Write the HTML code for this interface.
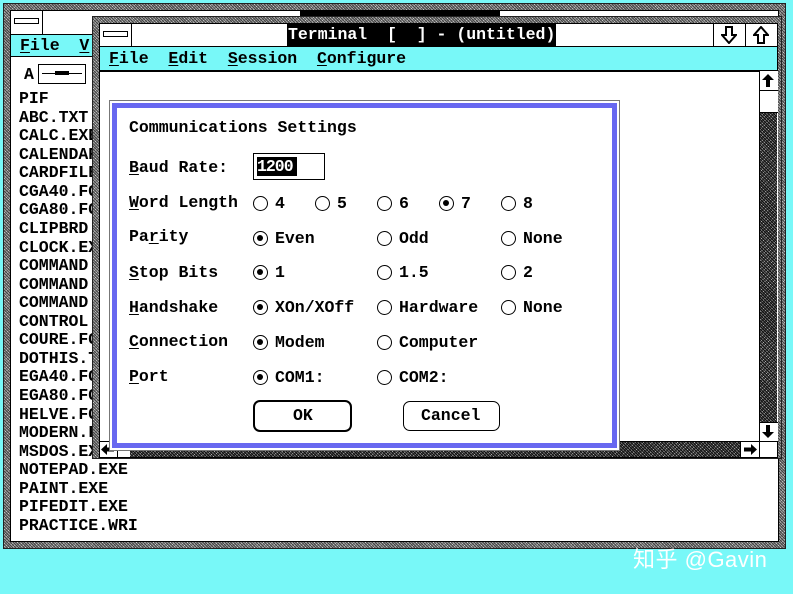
<!DOCTYPE html>
<html><head><meta charset="utf-8"><style>
*{margin:0;padding:0;box-sizing:border-box}
body{width:793px;height:594px;background:#78f8f8;position:relative;overflow:hidden;font-family:"Liberation Mono",monospace;font-weight:bold;font-size:16.5px;color:#000}
.a{position:absolute}
.hat{background-color:#8c8c8c;background-image:repeating-linear-gradient(45deg,#444 0 1px,transparent 1px 2px),repeating-linear-gradient(-45deg,#ccc 0 1px,transparent 1px 3px);border:1px solid #222}
.dark{background-color:#444;background-image:repeating-linear-gradient(45deg,#111 0 1px,transparent 1px 2px),repeating-linear-gradient(-45deg,#aaa 0 1px,transparent 1px 3px)}
.w{background:#fff}
.cy{background:#78f8f8}
.t{position:absolute;white-space:pre;line-height:18px}
u{text-decoration:underline;text-underline-offset:2px}
.r{position:absolute;width:15px;height:15px;border:1.5px solid #000;border-radius:50%;background:#fff}
.r.on::after{content:"";position:absolute;left:3px;top:3px;width:6px;height:6px;border-radius:50%;background:#000}
</style></head><body>
<!-- outer window -->
<div class="a hat" style="left:3px;top:3px;width:783px;height:546px"></div>
<div class="a w" style="left:10px;top:10px;width:769px;height:532px;border:1px solid #000"></div>
<div class="a" style="left:10px;top:10px;width:769px;height:25px;border-bottom:1px solid #000"></div>
<div class="a" style="left:42px;top:10px;width:1px;height:25px;background:#000"></div>
<div class="a" style="left:14px;top:18px;width:25px;height:6px;border:1.5px solid #000;background:#fff"></div>
<div class="a" style="left:300px;top:10px;width:200px;height:8px;background:#000"></div>
<div class="a cy" style="left:11px;top:35px;width:767px;height:22px;border-bottom:1px solid #000"></div>
<div class="t" style="left:20px;top:37px"><u>F</u>ile  <u>V</u></div>
<div class="t" style="left:24px;top:66px">A</div>
<div class="a" style="left:38px;top:64px;width:48px;height:20px;border:1px solid #000"></div>
<div class="a" style="left:42px;top:73px;width:40px;height:1px;background:#000"></div>
<div class="a" style="left:55px;top:71px;width:14px;height:4px;background:#000"></div>
<div class="t" style="left:19px;top:90px;line-height:18.57px">PIF
ABC.TXT
CALC.EXE
CALENDAR
CARDFILE
CGA40.FON
CGA80.FON
CLIPBRD
CLOCK.EXE
COMMAND
COMMAND
COMMAND
CONTROL
COURE.FON
DOTHIS.T
EGA40.FON
EGA80.FON
HELVE.FON
MODERN.F
MSDOS.EXE
NOTEPAD.EXE
PAINT.EXE
PIFEDIT.EXE
PRACTICE.WRI</div>
<!-- terminal window -->
<div class="a hat" style="left:92px;top:16px;width:690px;height:443px"></div>
<div class="a w" style="left:99px;top:23px;width:679px;height:24px;border:1px solid #000"></div>
<div class="a" style="left:131px;top:23px;width:1px;height:24px;background:#000"></div>
<div class="a" style="left:103px;top:31px;width:25px;height:6px;border:1.5px solid #000;background:#fff"></div>
<div class="a" style="left:287px;top:24px;width:269px;height:22px;background:#000"></div>
<div class="t" style="left:288px;top:26px;color:#fff">Terminal  [  ] - (untitled)</div>
<div class="a" style="left:713px;top:23px;width:1px;height:24px;background:#000"></div>
<div class="a" style="left:745px;top:23px;width:1px;height:24px;background:#000"></div>
<svg class="a" style="left:721px;top:26px" width="16" height="18" viewBox="0 0 16 18"><path d="M5 1h6v8h4l-7 8-7-8h4z" fill="#fff" stroke="#000" stroke-width="2"/></svg>
<svg class="a" style="left:753px;top:26px" width="16" height="18" viewBox="0 0 16 18"><path d="M5 17h6v-8h4l-7-8-7 8h4z" fill="#fff" stroke="#000" stroke-width="2"/></svg>
<div class="a cy" style="left:99px;top:47px;width:679px;height:24px;border-bottom:1px solid #000;border-left:1px solid #000;border-right:1px solid #000"></div>
<div class="t" style="left:109px;top:50px"><u>F</u>ile  <u>E</u>dit  <u>S</u>ession  <u>C</u>onfigure</div>
<div class="a w" style="left:99px;top:71px;width:679px;height:387px;border:1px solid #000"></div>
<!-- v scroll -->
<div class="a w" style="left:759px;top:71px;width:19px;height:370px;border-left:1px solid #000"></div>
<div class="a dark" style="left:760px;top:112px;width:17px;height:311px"></div>
<div class="a" style="left:760px;top:90px;width:18px;height:1px;background:#000"></div>
<div class="a" style="left:760px;top:112px;width:18px;height:1px;background:#000"></div>
<svg class="a" style="left:762px;top:74px" width="12" height="13" viewBox="0 0 12 13"><path d="M6 0L0 6h4v7h4V6h4z"/></svg>
<div class="a" style="left:760px;top:422px;width:18px;height:1px;background:#000"></div>
<svg class="a" style="left:762px;top:425px" width="12" height="13" viewBox="0 0 12 13"><path d="M6 13L0 7h4V0h4v7h4z"/></svg>
<!-- h scroll -->
<div class="a" style="left:99px;top:441px;width:679px;height:1px;background:#000"></div>
<div class="a dark" style="left:130px;top:442px;width:610px;height:15px"></div>
<svg class="a" style="left:101px;top:444px" width="13" height="11" viewBox="0 0 13 11"><path d="M0 5.5L6 0v3.5h7v4H6V11z"/></svg>
<div class="a" style="left:117px;top:442px;width:1px;height:15px;background:#000"></div>
<div class="a" style="left:740px;top:442px;width:1px;height:15px;background:#000"></div>
<svg class="a" style="left:744px;top:444px" width="13" height="11" viewBox="0 0 13 11"><path d="M13 5.5L7 0v3.5H0v4h7V11z"/></svg>
<div class="a" style="left:759px;top:441px;width:1px;height:17px;background:#000"></div>
<!-- dialog -->
<div class="a" style="left:109px;top:100px;width:511px;height:351px;background:#fff;border:1px solid #777"></div>
<div class="a" style="left:112px;top:103px;width:505px;height:345px;border:5px solid #6868f0"></div>
<div class="t" style="left:129px;top:119px">Communications Settings</div>
<div class="t" style="left:129px;top:159px"><u>B</u>aud Rate:</div>
<div class="a" style="left:253px;top:153px;width:72px;height:27px;border:1.5px solid #000"></div>
<div class="a" style="left:257px;top:157px;width:40px;height:19px;background:#000"></div>
<div class="t" style="left:257px;top:158px;color:#fff;letter-spacing:-1px">1200</div>
<div class="t" style="left:129px;top:194px"><u>W</u>ord Length</div>
<div class="t" style="left:129px;top:228px">Pa<u>r</u>ity</div>
<div class="t" style="left:129px;top:264px"><u>S</u>top Bits</div>
<div class="t" style="left:129px;top:299px"><u>H</u>andshake</div>
<div class="t" style="left:129px;top:333px"><u>C</u>onnection</div>
<div class="t" style="left:129px;top:368px"><u>P</u>ort</div>

<div class="r" style="left:253px;top:196px"></div><div class="t" style="left:275px;top:195px">4</div>
<div class="r" style="left:315px;top:196px"></div><div class="t" style="left:337px;top:195px">5</div>
<div class="r" style="left:377px;top:196px"></div><div class="t" style="left:399px;top:195px">6</div>
<div class="r on" style="left:439px;top:196px"></div><div class="t" style="left:461px;top:195px">7</div>
<div class="r" style="left:501px;top:196px"></div><div class="t" style="left:523px;top:195px">8</div>

<div class="r on" style="left:253px;top:231px"></div><div class="t" style="left:275px;top:230px">Even</div>
<div class="r" style="left:377px;top:231px"></div><div class="t" style="left:399px;top:230px">Odd</div>
<div class="r" style="left:501px;top:231px"></div><div class="t" style="left:523px;top:230px">None</div>

<div class="r on" style="left:253px;top:265px"></div><div class="t" style="left:275px;top:264px">1</div>
<div class="r" style="left:377px;top:265px"></div><div class="t" style="left:399px;top:264px">1.5</div>
<div class="r" style="left:501px;top:265px"></div><div class="t" style="left:523px;top:264px">2</div>

<div class="r on" style="left:253px;top:300px"></div><div class="t" style="left:275px;top:299px">XOn/XOff</div>
<div class="r" style="left:377px;top:300px"></div><div class="t" style="left:399px;top:299px">Hardware</div>
<div class="r" style="left:501px;top:300px"></div><div class="t" style="left:523px;top:299px">None</div>

<div class="r on" style="left:253px;top:335px"></div><div class="t" style="left:275px;top:334px">Modem</div>
<div class="r" style="left:377px;top:335px"></div><div class="t" style="left:399px;top:334px">Computer</div>

<div class="r on" style="left:253px;top:370px"></div><div class="t" style="left:275px;top:369px">COM1:</div>
<div class="r" style="left:377px;top:370px"></div><div class="t" style="left:399px;top:369px">COM2:</div>

<div class="a" style="left:253px;top:400px;width:99px;height:32px;border:2.5px solid #000;border-radius:7px"></div>
<div class="t" style="left:293px;top:407px">OK</div>
<div class="a" style="left:403px;top:401px;width:97px;height:30px;border:1.5px solid #000;border-radius:7px"></div>
<div class="t" style="left:421px;top:407px">Cancel</div>

<div class="t" style="left:633px;top:546px;color:#fff;font-family:'Liberation Sans','Noto Sans CJK SC',sans-serif;font-weight:normal;font-size:22px;line-height:28px;letter-spacing:0.5px">知乎 @Gavin</div>
</body></html>
